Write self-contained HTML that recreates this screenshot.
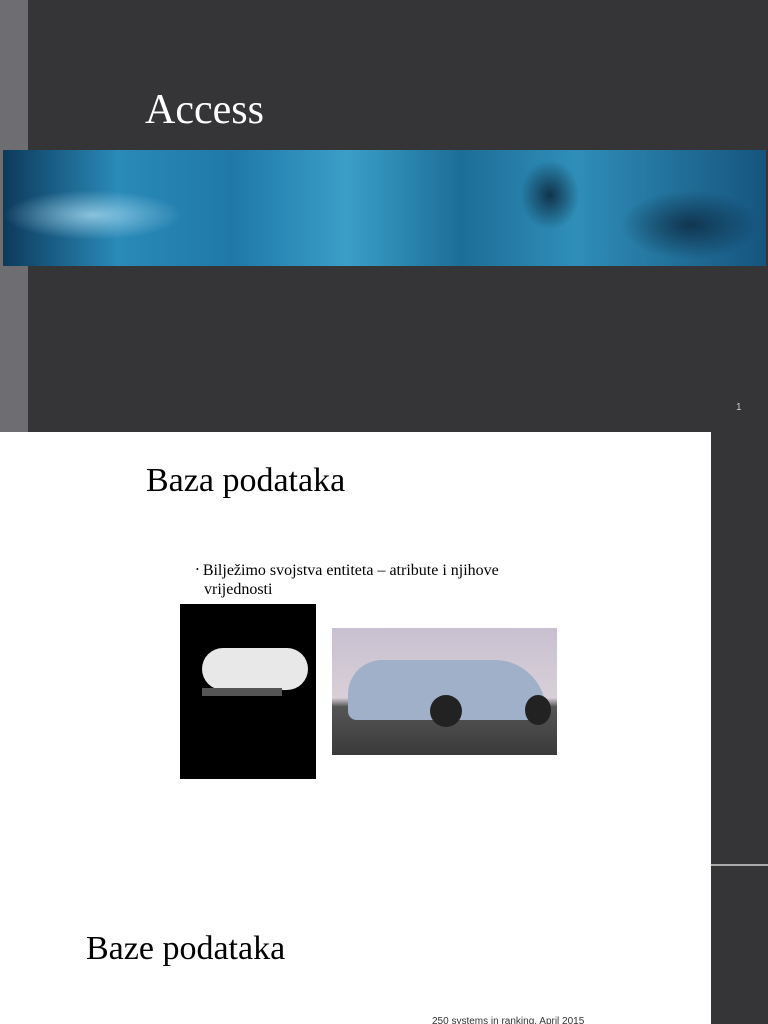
<!DOCTYPE html>
<html style="overflow:hidden"><head><style>
body{margin:0;width:768px;height:1024px;position:relative;overflow:hidden;background:#353537;font-family:"Liberation Serif",serif}
div{position:absolute}
</style></head><body>
<div style="left:0;top:0;width:28px;height:432px;background:#6e6d72"></div>
<div style="left:145px;top:86px;font-size:42px;color:#fff">Access</div>
<div style="left:3px;top:150px;width:763px;height:116px;background:linear-gradient(90deg,#0d3a5c 0%,#2a8ab8 15%,#1f78a8 30%,#3a9fc7 45%,#1c6e98 60%,#2f8eb8 75%,#15557f 100%)"></div>
<div style="left:3px;top:190px;width:180px;height:50px;background:radial-gradient(ellipse at 50% 50%,rgba(180,225,245,.7),rgba(0,0,0,0) 70%)"></div>
<div style="left:520px;top:160px;width:60px;height:70px;background:radial-gradient(ellipse,rgba(10,30,50,.8),rgba(0,0,0,0) 70%)"></div>
<div style="left:620px;top:190px;width:140px;height:70px;background:radial-gradient(ellipse,rgba(10,30,50,.7),rgba(0,0,0,0) 70%)"></div>
<div style="left:736px;top:402px;font:10px 'Liberation Sans',sans-serif;color:#ccc">1</div>
<div style="left:0;top:432px;width:711px;height:434px;background:#fff"></div>
<div style="left:146px;top:462px;font-size:34px;color:#000">Baza podataka</div>
<div style="left:196px;top:560px;font-size:16px;color:#000;line-height:19px;width:360px"><span style="font-size:8px;vertical-align:3px">•</span> Bilježimo svojstva entiteta – atribute i njihove<br>&nbsp;&nbsp;vrijednosti</div>
<div style="left:180px;top:604px;width:136px;height:175px;background:#000"></div>
<div style="left:202px;top:648px;width:106px;height:42px;border-radius:40px;background:#e8e8e8"></div>
<div style="left:202px;top:688px;width:80px;height:8px;background:#555"></div>
<div style="left:332px;top:628px;width:225px;height:127px;background:linear-gradient(#c8c0d0 0%,#d8cfd8 55%,#555 62%,#3a3a3a 100%)"></div>
<div style="left:348px;top:660px;width:198px;height:60px;border-radius:40px 60px 10px 10px;background:#9fb0c8"></div>
<div style="left:430px;top:695px;width:32px;height:32px;border-radius:50%;background:#222"></div>
<div style="left:525px;top:695px;width:26px;height:30px;border-radius:50%;background:#222"></div>
<div style="left:711px;top:864px;width:57px;height:2px;background:#aaa"></div>
<div style="left:0;top:866px;width:711px;height:158px;background:#fff;overflow:hidden">
<div style="left:86px;top:64px;font-size:34px;color:#000">Baze podataka</div>
<div style="left:432px;top:150px;font:10px 'Liberation Sans',sans-serif;color:#333;white-space:nowrap">250 systems in ranking, April 2015</div>
</div>
</body></html>
